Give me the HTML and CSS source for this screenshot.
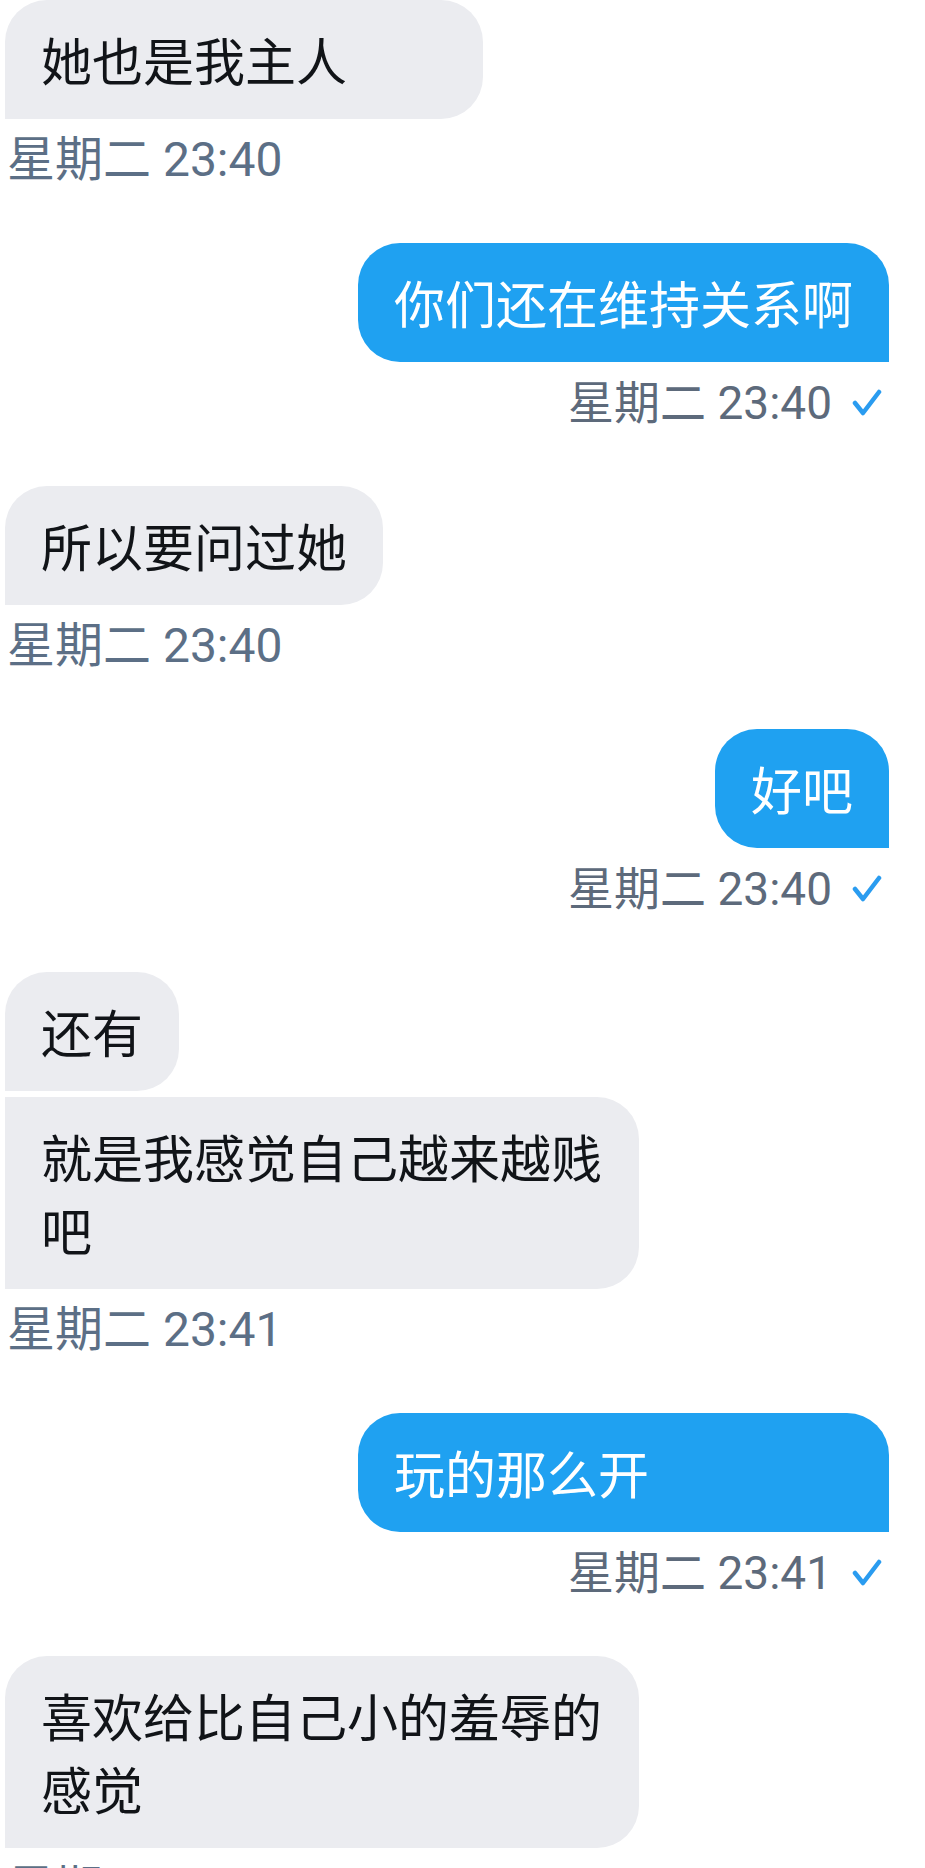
FILE: index.html
```html
<!DOCTYPE html>
<html lang="zh-CN">
<head>
<meta charset="UTF-8" />
<meta name="viewport" content="width=device-width, initial-scale=1" />
<title>聊天</title>
<link rel="stylesheet" href="styles.css">
</head>
<body>
<main class="thread">

  <div class="msg-group in">
    <div class="bubble first last wide">她也是我主人</div>
    <div class="meta">星期二 23:40</div>
  </div>

  <div class="msg-group out">
    <div class="bubble first last">你们还在维持关系啊</div>
    <div class="meta">星期二 23:40
      <svg class="tick" viewBox="0 0 30 30" aria-hidden="true"><path d="M3 15 L11 25 L27 4" /></svg>
    </div>
  </div>

  <div class="msg-group in">
    <div class="bubble first last">所以要问过她</div>
    <div class="meta">星期二 23:40</div>
  </div>

  <div class="msg-group out">
    <div class="bubble first last">好吧</div>
    <div class="meta">星期二 23:40
      <svg class="tick" viewBox="0 0 30 30" aria-hidden="true"><path d="M3 15 L11 25 L27 4" /></svg>
    </div>
  </div>

  <div class="msg-group in">
    <div class="bubble first">还有</div>
    <div class="bubble last">就是我感觉自己越来越贱吧</div>
    <div class="meta">星期二 23:41</div>
  </div>

  <div class="msg-group out">
    <div class="bubble first last wide">玩的那么开</div>
    <div class="meta">星期二 23:41
      <svg class="tick" viewBox="0 0 30 30" aria-hidden="true"><path d="M3 15 L11 25 L27 4" /></svg>
    </div>
  </div>

  <div class="msg-group in">
    <div class="bubble first last">喜欢给比自己小的羞辱的感觉</div>
    <div class="meta">星期二 23:41</div>
  </div>

</main>
</body>
</html>
```

FILE: styles.css
```css
/* Base */
* {
  box-sizing: border-box;
}
body {
  margin: 0;
  background: #ffffff;
  font-family: Roboto, "Noto Sans CJK SC", sans-serif;
  color: #111418;
}

/* Thread */
.thread {
  display: flex;
  flex-direction: column;
  gap: 55px;
  padding: 0 36px 0 5px;
}
.msg-group {
  display: flex;
  flex-direction: column;
  gap: 6px;
}
.msg-group.in {
  align-items: flex-start;
}
.msg-group.out {
  align-items: flex-end;
}

/* Bubbles */
.bubble {
  max-width: 634px;
  padding: 23px 36px;
  font-family: "Noto Sans CJK SC", sans-serif;
  font-size: 51px;
  line-height: 73px;
  border-radius: 0 42px 42px 0;
}
.in .bubble {
  background: #ebecf0;
  color: #111418;
}
.in .bubble.first {
  border-top-left-radius: 42px;
}
.out .bubble {
  background: #1fa1f1;
  color: #ffffff;
  border-radius: 42px 0 0 42px;
}
.out .bubble.first {
  border-top-right-radius: 42px;
}
.in .bubble.wide {
  min-width: 478px;
}
.out .bubble.wide {
  min-width: 531px;
}

/* Timestamp row */
.meta {
  display: flex;
  align-items: center;
  gap: 20px;
  margin-top: 7px;
  padding-left: 2px;
  font-size: 48px;
  line-height: 56px;
  color: #5c6f86;
}
.out .meta {
  padding-left: 0;
  margin-right: 7px;
  font-size: 46px;
  color: #5d6a7b;
}
.tick {
  width: 30px;
  height: 30px;
  fill: none;
  stroke: #2a9cf0;
  stroke-width: 4.5;
  stroke-linecap: round;
  stroke-linejoin: round;
}
```
